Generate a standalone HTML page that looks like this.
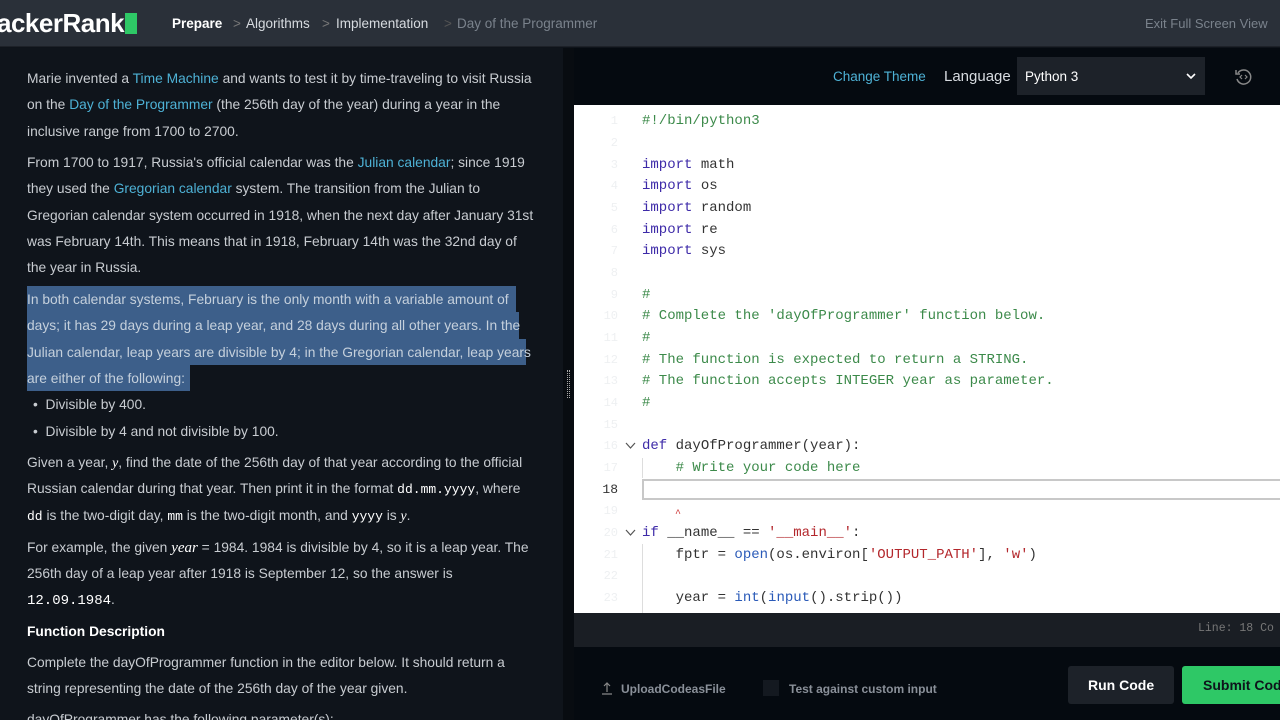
<!DOCTYPE html>
<html><head><meta charset="utf-8"><style>
*{margin:0;padding:0;box-sizing:border-box}
html,body{width:1280px;height:720px;overflow:hidden}
body{background:#0e131a;font-family:"Liberation Sans",sans-serif;position:relative}
.top{position:absolute;left:0;top:0;width:1280px;height:47px;background:#2a3039;border-bottom:1px solid #1d2128}
.logo{position:absolute;left:-3px;top:8px;font-size:26px;font-weight:bold;color:#fff;letter-spacing:-0.5px}
.logo i{display:inline-block;width:12px;height:21px;background:#2ec866;vertical-align:-2px;margin-left:1px}
.crumb{position:absolute;top:16px;font-size:13.5px;color:#d7dbe0}
.left{position:absolute;left:0;top:48px;width:563px;height:672px;background:#0f141b}
.div{position:absolute;left:563px;top:48px;width:11px;height:672px;background:#080c11}
.p{position:absolute;left:27px;font-size:13.8px;color:#c8ccd1;white-space:nowrap}
.a{color:#4eb2d6}
.mono{font-family:"Liberation Mono",monospace;color:#fff;font-size:13px}
.right{position:absolute;left:574px;top:48px;width:706px;height:672px;background:#050a10}
.ed{position:absolute;left:574px;top:105px;width:706px;height:508px;background:#fff}
.ln{position:absolute;left:590px;width:28px;text-align:right;font-family:"Liberation Mono",monospace;font-size:12px;color:#eef0f2}
.c{position:absolute;left:642px;font-family:"Liberation Mono",monospace;font-size:14px;color:#333;white-space:pre}
.k{color:#3d2aa8}.g{color:#3c8a4a}.s{color:#b3272c}.b{color:#2a5ab8}
.status{position:absolute;left:574px;top:613px;width:706px;height:34px;background:#1a1e24}
</style></head><body>
<div class="top">
<div class="logo">ackerRank<i></i></div>
<div class="crumb" style="left:172px;font-weight:bold;color:#fff">Prepare</div>
<div class="crumb" style="left:233px;color:#777">&gt;</div>
<div class="crumb" style="left:246px">Algorithms</div>
<div class="crumb" style="left:322px;color:#777">&gt;</div>
<div class="crumb" style="left:336px">Implementation</div>
<div class="crumb" style="left:444px;color:#555">&gt;</div>
<div class="crumb" style="left:457px;color:#7a828c">Day of the Programmer</div>
<div class="crumb" style="left:1145px;color:#7a828c;font-size:13px">Exit Full Screen View</div>
</div>
<div class="left"></div>
<div class="div"><div style="position:absolute;left:4px;top:322px;width:3px;height:28px;border-left:1px dotted #aaa;border-right:1px dotted #aaa"></div></div>
<div class="p" style="top:71px">Marie invented a <span class="a">Time Machine</span> and wants to test it by time-traveling to visit Russia</div>
<div class="p" style="top:97px">on the <span class="a">Day of the Programmer</span> (the 256th day of the year) during a year in the</div>
<div class="p" style="top:124px">inclusive range from 1700 to 2700.</div>
<div class="p" style="top:155px">From 1700 to 1917, Russia's official calendar was the <span class="a">Julian calendar</span>; since 1919</div>
<div class="p" style="top:181px">they used the <span class="a">Gregorian calendar</span> system. The transition from the Julian to</div>
<div class="p" style="top:208px">Gregorian calendar system occurred in 1918, when the next day after January 31st</div>
<div class="p" style="top:234px">was February 14th. This means that in 1918, February 14th was the 32nd day of</div>
<div class="p" style="top:260px">the year in Russia.</div>
<div style="position:absolute;left:27px;top:286px;width:489px;height:26px;background:#3d5f8a"></div>
<div style="position:absolute;left:27px;top:312px;width:492px;height:27px;background:#3d5f8a"></div>
<div style="position:absolute;left:27px;top:339px;width:499px;height:26px;background:#3d5f8a"></div>
<div style="position:absolute;left:27px;top:365px;width:163px;height:26px;background:#3d5f8a"></div>
<div class="p" style="top:292px;color:#c5d0dc">In both calendar systems, February is the only month with a variable amount of</div>
<div class="p" style="top:318px;color:#c5d0dc">days; it has 29 days during a leap year, and 28 days during all other years. In the</div>
<div class="p" style="top:345px;color:#c5d0dc">Julian calendar, leap years are divisible by 4; in the Gregorian calendar, leap years</div>
<div class="p" style="top:371px;color:#c5d0dc">are either of the following:</div>
<div class="p" style="top:397px;left:33px">•&nbsp;&nbsp;Divisible by 400.</div>
<div class="p" style="top:424px;left:33px">•&nbsp;&nbsp;Divisible by 4 and not divisible by 100.</div>
<div class="p" style="top:455px">Given a year, <i style="font-family:'Liberation Serif',serif;color:#fff">y</i>, find the date of the 256th day of that year according to the official</div>
<div class="p" style="top:481px">Russian calendar during that year. Then print it in the format <span class="mono">dd.mm.yyyy</span>, where</div>
<div class="p" style="top:508px"><span class="mono">dd</span> is the two-digit day, <span class="mono">mm</span> is the two-digit month, and <span class="mono">yyyy</span> is <i style="font-family:'Liberation Serif',serif;color:#fff">y</i>.</div>
<div class="p" style="top:540px">For example, the given <i style="font-family:'Liberation Serif',serif;color:#fff;font-size:15px">year</i> = 1984. 1984 is divisible by 4, so it is a leap year. The</div>
<div class="p" style="top:566px">256th day of a leap year after 1918 is September 12, so the answer is</div>
<div class="p" style="top:592px"><span class="mono" style="font-size:14px">12.09.1984</span>.</div>
<div class="p" style="top:624px;font-weight:bold;color:#fff">Function Description</div>
<div class="p" style="top:655px">Complete the dayOfProgrammer function in the editor below. It should return a</div>
<div class="p" style="top:681px">string representing the date of the 256th day of the year given.</div>
<div class="p" style="top:712px">dayOfProgrammer has the following parameter(s):</div>
<div class="right"></div>
<div style="position:absolute;left:833px;top:69px;font-size:13.5px;color:#4eb2d6">Change Theme</div>
<div style="position:absolute;left:944px;top:68px;font-size:15px;color:#d7dbe0">Language</div>
<div style="position:absolute;left:1017px;top:57px;width:188px;height:38px;background:#1d2229"></div>
<div style="position:absolute;left:1025px;top:69px;font-size:13.5px;color:#fff">Python 3</div>
<svg style="position:absolute;left:1186px;top:72px" width="10" height="8"><path d="M1 2l4 4 4-4" stroke="#fff" stroke-width="1.6" fill="none"/></svg>
<svg style="position:absolute;left:1234px;top:68px" width="18" height="18"><path d="M4 5A7 7 0 1 1 3 11" stroke="#888" stroke-width="1.5" fill="none"/><path d="M2 2v4h4" stroke="#888" stroke-width="1.5" fill="none"/><path d="M8 7l-2 2 2 2M11 7l2 2-2 2" stroke="#888" stroke-width="1.2" fill="none"/></svg>
<div class="ed"></div>
<div class="ln" style="top:114px">1</div><div class="ln" style="top:136px">2</div><div class="ln" style="top:158px">3</div><div class="ln" style="top:179px">4</div><div class="ln" style="top:201px">5</div><div class="ln" style="top:223px">6</div><div class="ln" style="top:244px">7</div><div class="ln" style="top:266px">8</div><div class="ln" style="top:288px">9</div><div class="ln" style="top:309px">10</div><div class="ln" style="top:331px">11</div><div class="ln" style="top:353px">12</div><div class="ln" style="top:374px">13</div><div class="ln" style="top:396px">14</div><div class="ln" style="top:418px">15</div><div class="ln" style="top:439px">16</div><div class="ln" style="top:461px">17</div><div class="ln" style="top:482px;color:#333;font-size:13px">18</div><div class="ln" style="top:504px">19</div><div class="ln" style="top:526px">20</div><div class="ln" style="top:548px">21</div><div class="ln" style="top:569px">22</div><div class="ln" style="top:591px">23</div>
<div class="c g" style="top:113px">#!/bin/python3</div>
<div class="c" style="top:157px"><span class="k">import</span> math</div>
<div class="c" style="top:178px"><span class="k">import</span> os</div>
<div class="c" style="top:200px"><span class="k">import</span> random</div>
<div class="c" style="top:222px"><span class="k">import</span> re</div>
<div class="c" style="top:243px"><span class="k">import</span> sys</div>
<div class="c g" style="top:287px">#</div>
<div class="c g" style="top:308px"># Complete the 'dayOfProgrammer' function below.</div>
<div class="c g" style="top:330px">#</div>
<div class="c g" style="top:352px"># The function is expected to return a STRING.</div>
<div class="c g" style="top:373px"># The function accepts INTEGER year as parameter.</div>
<div class="c g" style="top:395px">#</div>
<div class="c" style="top:438px"><span class="k">def</span> dayOfProgrammer(year):</div>
<div class="c g" style="top:460px">    # Write your code here</div>
<div style="position:absolute;left:642px;top:479px;width:640px;height:21px;border:2px solid #c8c8c8;border-right:none"></div>
<div class="c" style="top:509px;left:675px;color:#c33;font-size:10px">^</div>
<div class="c" style="top:525px"><span class="k">if</span> __name__ == <span class="s">'__main__'</span>:</div>
<div class="c" style="top:547px">    fptr = <span class="b">open</span>(os.environ[<span class="s">'OUTPUT_PATH'</span>], <span class="s">'w'</span>)</div>
<div class="c" style="top:590px">    year = <span class="b">int</span>(<span class="b">input</span>().strip())</div>
<svg style="position:absolute;left:625px;top:442px" width="11" height="8"><path d="M1 1l4.5 5 4.5-5" stroke="#555" stroke-width="1.2" fill="none"/></svg>
<svg style="position:absolute;left:625px;top:529px" width="11" height="8"><path d="M1 1l4.5 5 4.5-5" stroke="#555" stroke-width="1.2" fill="none"/></svg>
<div style="position:absolute;left:642px;top:458px;width:1px;height:20px;background:#ddd"></div>
<div style="position:absolute;left:642px;top:544px;width:1px;height:69px;background:#ddd"></div>
<div class="status"></div>
<div style="position:absolute;left:1198px;top:622px;font-family:'Liberation Mono',monospace;font-size:11.5px;color:#777;white-space:nowrap">Line: 18 Co</div>
<svg style="position:absolute;left:601px;top:681px" width="12" height="14"><path d="M6 11V2M3 5l3-3 3 3M1 13h10" stroke="#888" stroke-width="1.2" fill="none"/></svg>
<div style="position:absolute;left:621px;top:682px;font-size:12px;font-weight:bold;color:#8a9099">UploadCodeasFile</div>
<div style="position:absolute;left:763px;top:680px;width:16px;height:16px;background:#141920"></div>
<div style="position:absolute;left:789px;top:682px;font-size:12px;font-weight:bold;color:#8a9099">Test against custom input</div>
<div style="position:absolute;left:1068px;top:666px;width:106px;height:38px;background:#1d2229;border-radius:3px"></div>
<div style="position:absolute;left:1088px;top:677px;font-size:14px;font-weight:bold;color:#fff">Run Code</div>
<div style="position:absolute;left:1182px;top:666px;width:110px;height:38px;background:#2ec866;border-radius:3px"></div>
<div style="position:absolute;left:1203px;top:677px;font-size:14px;font-weight:bold;color:#0e141b;white-space:nowrap">Submit Code</div>
</body></html>
